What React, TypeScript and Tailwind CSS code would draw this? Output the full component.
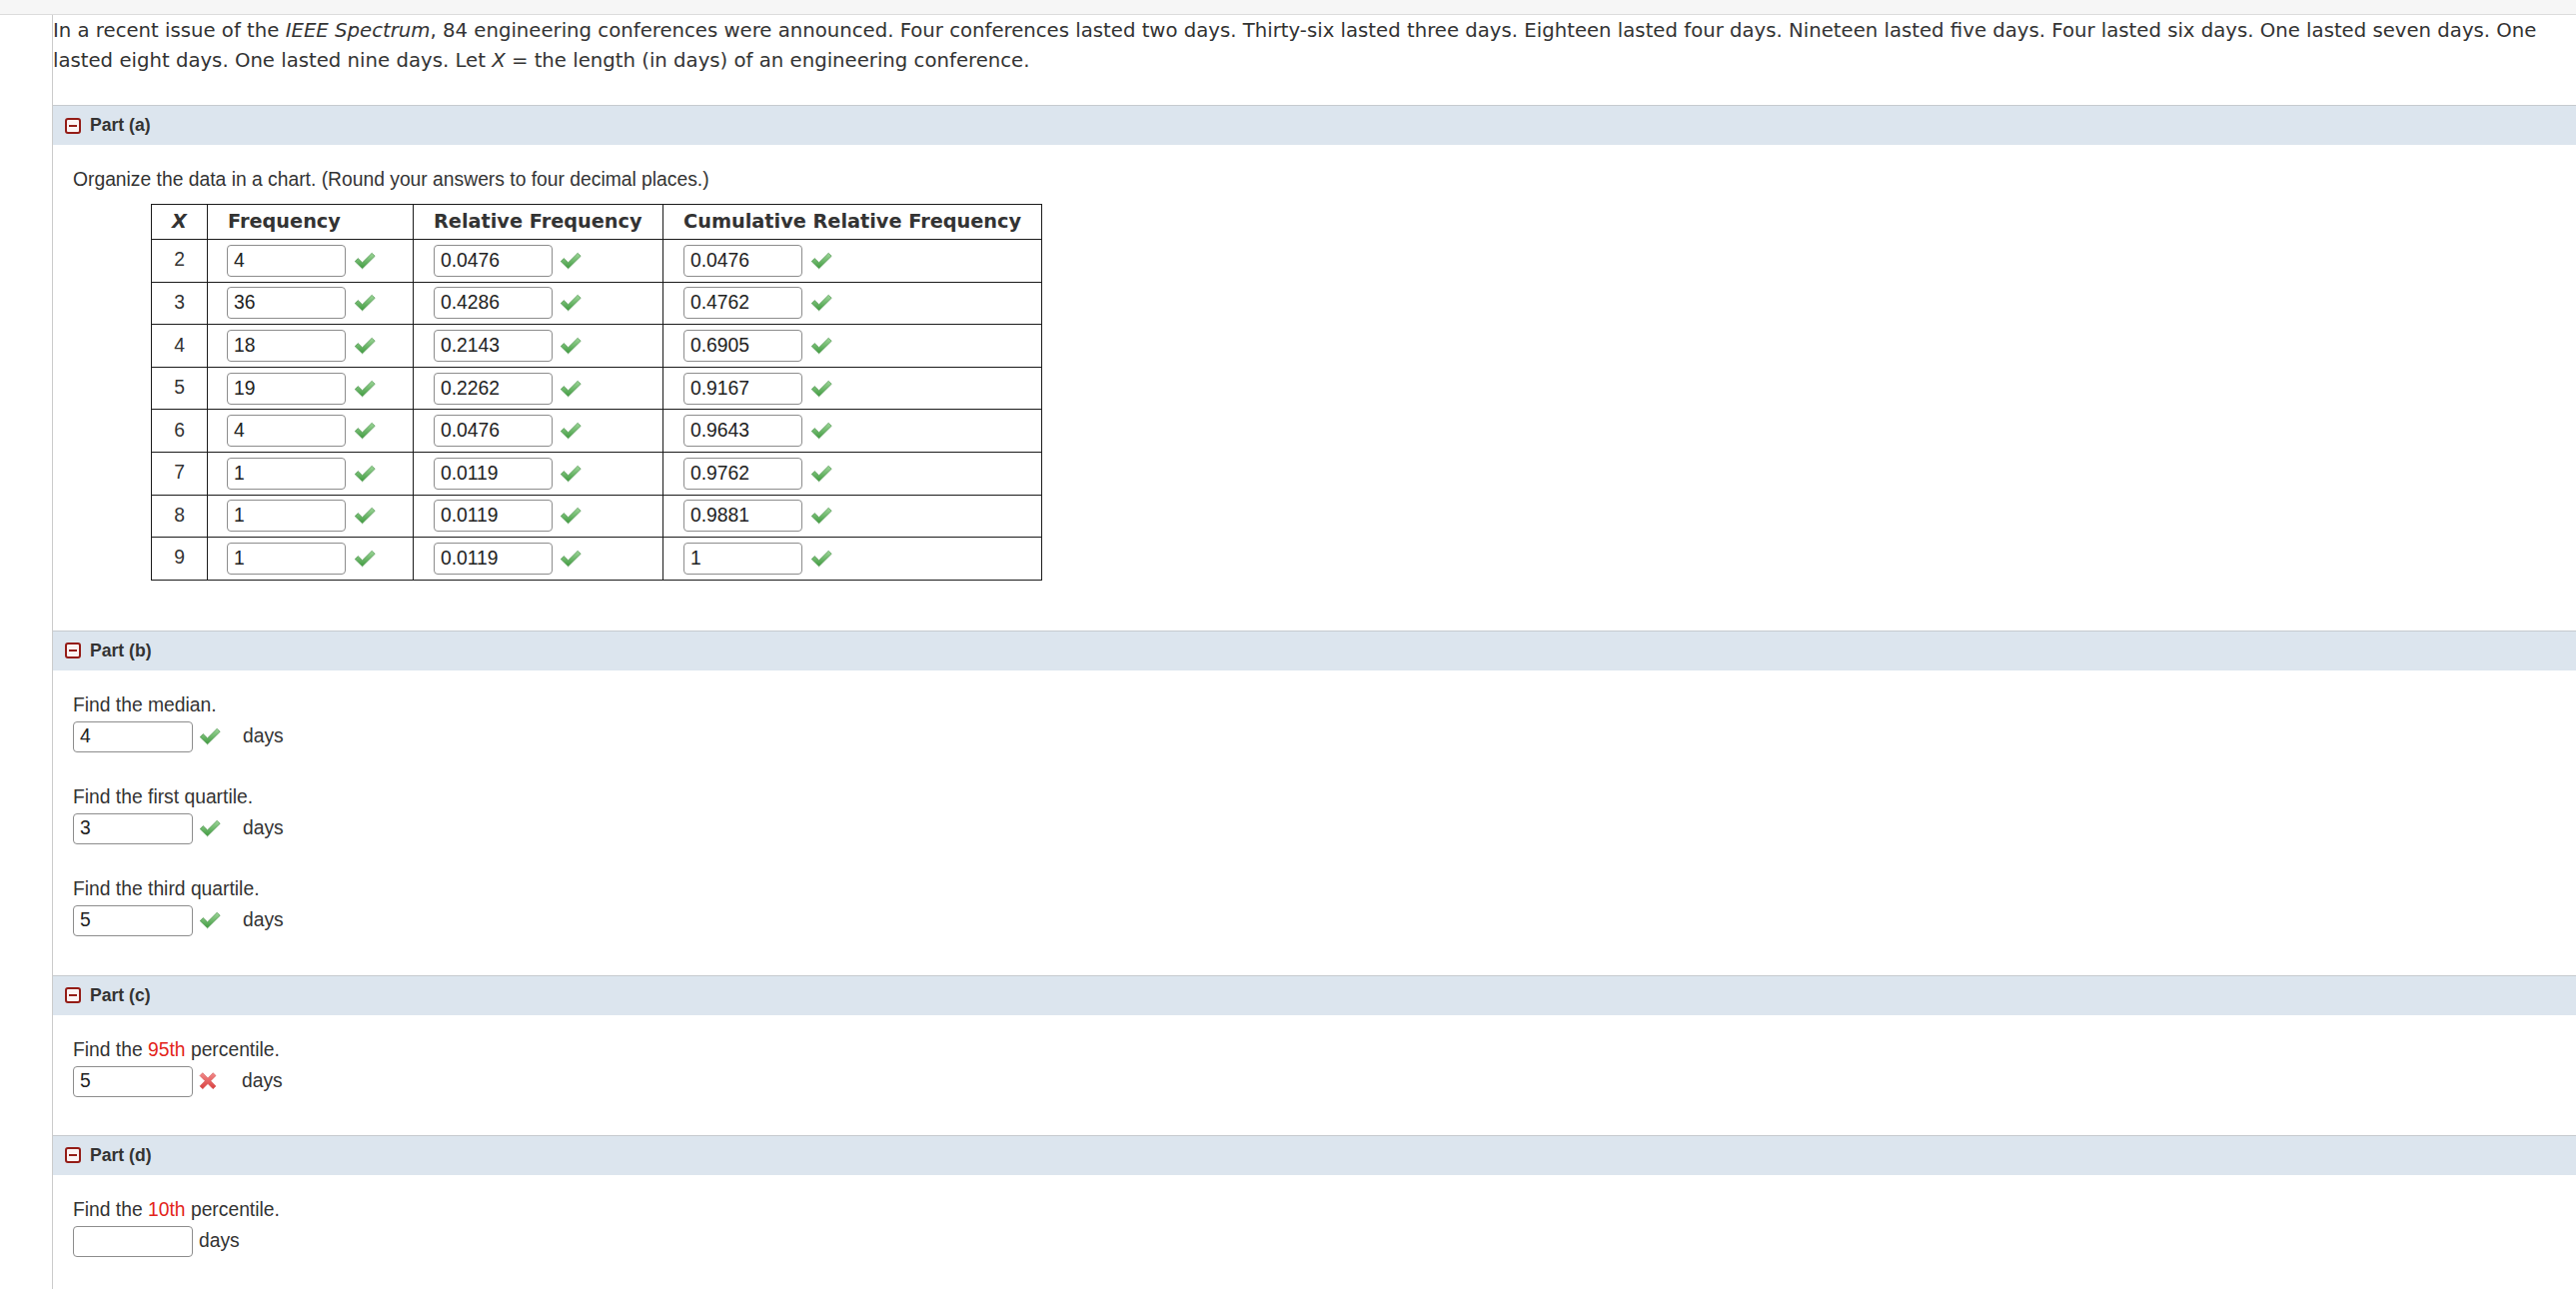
import React, { useId } from 'react';

const sans = "font-['Liberation_Sans',Arial,Helvetica,sans-serif]";
const verdana = "font-['DejaVu_Sans',Verdana,sans-serif]";

const rows: [number, string, string, string][] = [
  [2, '4', '0.0476', '0.0476'],
  [3, '36', '0.4286', '0.4762'],
  [4, '18', '0.2143', '0.6905'],
  [5, '19', '0.2262', '0.9167'],
  [6, '4', '0.0476', '0.9643'],
  [7, '1', '0.0119', '0.9762'],
  [8, '1', '0.0119', '0.9881'],
  [9, '1', '0.0119', '1'],
];

const CheckMark = () => {
  const id = useId();
  return (
    <svg width="22" height="18" viewBox="0 0 22 18" className="shrink-0">
      <defs>
        <linearGradient id={id} x1="0" y1="0" x2="0" y2="1">
          <stop offset="0" stopColor="#9fd79a" />
          <stop offset="1" stopColor="#3e9a3e" />
        </linearGradient>
      </defs>
      <path
        d="M1.2 9.6 L4.3 6.6 L8.6 10.8 L18.2 1.3 L21.2 4.3 L8.6 16.8 Z"
        fill={`url(#${id})`}
        stroke="#4f944f"
        strokeWidth="0.7"
        strokeLinejoin="round"
      />
    </svg>
  );
};

const CrossMark = () => {
  const id = useId();
  return (
    <svg width="22" height="20" viewBox="0 0 22 20" className="shrink-0">
      <defs>
        <linearGradient id={id} x1="0" y1="0" x2="0" y2="1">
          <stop offset="0" stopColor="#f28a8a" />
          <stop offset="1" stopColor="#d9403f" />
        </linearGradient>
      </defs>
      <path
        d="M2 4.5 L4.8 1.7 L10 6.9 L15.2 1.7 L18 4.5 L12.8 9.7 L18 14.9 L15.2 17.7 L10 12.5 L4.8 17.7 L2 14.9 L7.2 9.7 Z"
        fill={`url(#${id})`}
        stroke="#d25252"
        strokeWidth="0.6"
        strokeLinejoin="round"
      />
    </svg>
  );
};

const Box = ({ value, w = 'w-[119px]', h = 'h-[32px]' }: { value: string; w?: string; h?: string }) => (
  <input
    readOnly
    defaultValue={value}
    className={`${w} ${h} shrink-0 border border-[#8d8d8d] rounded-[4px] px-[6px] bg-white text-[19.3px] text-[#222] outline-none ${sans}`}
  />
);

const PartHeader = ({ label }: { label: string }) => (
  <div className="h-[40px] border-t border-[#c6cacf] bg-[#dce5ee] flex items-center pl-[12px] gap-[9px]">
    <span className="w-[16px] h-[16px] border-2 border-[#941c16] rounded-[3px] bg-[#fbf4f4] flex items-center justify-center">
      <span className="w-[8px] h-[2px] bg-[#941c16]" />
    </span>
    <span className={`text-[17.6px] font-bold text-[#333] ${sans}`}>{label}</span>
  </div>
);

const Question = ({
  children,
  value,
  mark,
  first,
}: {
  children: React.ReactNode;
  value: string;
  mark?: 'ok' | 'bad';
  first?: boolean;
}) => (
  <div className={first ? '' : 'mt-[34px]'}>
    <div className="leading-[22px]">{children}</div>
    <div className="mt-[5px] flex items-center">
      <Box value={value} w="w-[120px]" h="h-[31px]" />
      {mark === 'ok' && (
        <span className="ml-[6px]">
          <CheckMark />
        </span>
      )}
      {mark === 'bad' && (
        <span className="ml-[5px]">
          <CrossMark />
        </span>
      )}
      <span className={mark ? 'ml-[22px]' : 'ml-[6px]'}>days</span>
    </div>
  </div>
);

export default function App() {
  return (
    <div className="min-h-screen bg-white flex flex-col">
      <div className="h-[15px] bg-[#f6f6f6] border-b border-[#dcdcdc]" />
      <div className="flex flex-1">
        <div className="w-[52px] shrink-0" />
        <div className="flex-1 border-l border-[#cbcbcb] min-w-0">
          <p className={`pt-[1px] text-[19.7px] leading-[30px] text-[#333] ${verdana}`}>
            In a recent issue of the <i>IEEE Spectrum</i>, 84 engineering conferences were announced. Four conferences
            lasted two days. Thirty-six lasted three days. Eighteen lasted four days. Nineteen lasted five days. Four
            lasted six days. One lasted seven days. One lasted eight days. One lasted nine days. Let <i>X</i> = the
            length (in days) of an engineering conference.
          </p>

          <div className="mt-[29px]">
            <PartHeader label="Part (a)" />
            <div className={`pl-[20px] pt-[24px] pb-[50px] text-[19.3px] text-[#333] ${sans}`}>
              <div className="leading-[22px]">Organize the data in a chart. (Round your answers to four decimal places.)</div>
              <table className="mt-[13px] ml-[78px] border-collapse table-fixed w-[891px]">
                <colgroup>
                  <col className="w-[56px]" />
                  <col className="w-[206px]" />
                  <col className="w-[250px]" />
                  <col className="w-[379px]" />
                </colgroup>
                <thead>
                  <tr className={`h-[35px] text-[19.3px] font-bold text-[#333] ${verdana}`}>
                    <th className="border border-[#1b1b1b] text-center italic">X</th>
                    <th className="border border-[#1b1b1b] text-left pl-[20px]">Frequency</th>
                    <th className="border border-[#1b1b1b] text-left pl-[20px]">Relative Frequency</th>
                    <th className="border border-[#1b1b1b] text-left pl-[20px]">Cumulative Relative Frequency</th>
                  </tr>
                </thead>
                <tbody>
                  {rows.map(([x, f, rf, crf]) => (
                    <tr key={x} className="h-[42.6px]">
                      <td className="border border-[#1b1b1b] text-center">{x}</td>
                      <td className="border border-[#1b1b1b] pl-[19px]">
                        <div className="flex items-center gap-[8px]">
                          <Box value={f} />
                          <CheckMark />
                        </div>
                      </td>
                      <td className="border border-[#1b1b1b] pl-[20px]">
                        <div className="flex items-center gap-[7px]">
                          <Box value={rf} />
                          <CheckMark />
                        </div>
                      </td>
                      <td className="border border-[#1b1b1b] pl-[20px]">
                        <div className="flex items-center gap-[8px]">
                          <Box value={crf} />
                          <CheckMark />
                        </div>
                      </td>
                    </tr>
                  ))}
                </tbody>
              </table>
            </div>
          </div>

          <PartHeader label="Part (b)" />
          <div className={`pl-[20px] pt-[24px] pb-[39px] text-[19.3px] text-[#333] ${sans}`}>
            <Question first value="4" mark="ok">Find the median.</Question>
            <Question value="3" mark="ok">Find the first quartile.</Question>
            <Question value="5" mark="ok">Find the third quartile.</Question>
          </div>

          <PartHeader label="Part (c)" />
          <div className={`pl-[20px] pt-[24px] pb-[38px] text-[19.3px] text-[#333] ${sans}`}>
            <Question first value="5" mark="bad">
              Find the <span className="text-[#e3241b]">95th</span> percentile.
            </Question>
          </div>

          <PartHeader label="Part (d)" />
          <div className={`pl-[20px] pt-[24px] pb-[40px] text-[19.3px] text-[#333] ${sans}`}>
            <Question first value="">
              Find the <span className="text-[#e3241b]">10th</span> percentile.
            </Question>
          </div>
        </div>
      </div>
    </div>
  );
}
